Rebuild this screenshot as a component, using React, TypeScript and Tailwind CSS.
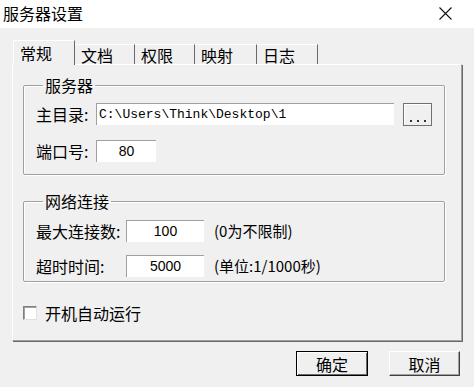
import React from 'react';

const cjk = "font-['Noto_Sans_CJK_SC','Liberation_Sans',sans-serif]";

function Tab({ label, active, w }: { label: string; active?: boolean; w: string }) {
  if (active) {
    return (
      <div className={`${w} h-[25px] -mb-px relative z-10 bg-[#f0f0f0] border-t border-l border-white border-r border-r-[#696969] pl-[6px] pt-[1px] text-[16px] leading-[22px]`}>
        {label}
      </div>
    );
  }
  return (
    <div className={`${w} h-[20px] border-t border-white border-r border-r-[#696969] pl-[6px] text-[16px] leading-[20px]`}>
      {label}
    </div>
  );
}

function Field({ value, w, mono }: { value: string; w: string; mono?: boolean }) {
  return (
    <div
      className={`${w} h-[22px] bg-white border-t border-l border-[#a0a0a0] flex items-center ${
        mono
          ? "pl-[2px] font-['Liberation_Mono',monospace] text-[13px]"
          : "justify-center font-['Liberation_Sans',sans-serif] text-[14px]"
      }`}
    >
      {value}
    </div>
  );
}

function Group({ title, children, className }: { title: string; children: React.ReactNode; className?: string }) {
  return (
    <fieldset className={`w-[422px] border border-[#a0a0a0] shadow-[inset_1px_1px_0_white,1px_1px_0_white] rounded-[2px] pl-[12px] ${className ?? ''}`}>
      <legend className="ml-[7px] px-[2px] text-[16px] leading-[20px]">{title}</legend>
      {children}
    </fieldset>
  );
}

export default function App() {
  return (
    <div className={`w-[474px] h-[387px] bg-[#f0f0f0] flex flex-col text-black ${cjk}`}>
      {/* title bar */}
      <div className="h-[28px] bg-white flex items-center justify-between pl-[3px] pr-[22px]">
        <span className="text-[16px] leading-[20px] -mt-[2px]">服务器设置</span>
        <svg width="13" height="13" viewBox="0 0 13 13" className="-mt-[2px]">
          <path d="M0.5 0.5 L12.5 12.5 M12.5 0.5 L0.5 12.5" stroke="#111" strokeWidth="1.1" />
        </svg>
      </div>

      <div className="pl-[12px] pt-[12px]">
        {/* tabs */}
        <div className="flex items-end h-[24px] pl-[1px]">
          <Tab label="常规" active w="w-[62px]" />
          <Tab label="文档" w="w-[60px]" />
          <Tab label="权限" w="w-[60px]" />
          <Tab label="映射" w="w-[62px]" />
          <Tab label="日志" w="w-[61px]" />
        </div>

        {/* panel */}
        <div className="w-[450px] h-[277px] bg-[#f0f0f0] border border-t-white border-l-white border-r-[#a0a0a0] border-b-[#a0a0a0] shadow-[1px_1px_0_#696969] pl-[10px] pt-[10px]">
          <Group title="服务器" className="pt-[8px] pb-[12px]">
            <div className="flex items-center h-[22px]">
              <span className="w-[60px] text-[16px] leading-[20px]">主目录:</span>
              <Field value="C:\Users\Think\Desktop\1" w="w-[298px]" mono />
              <div className="ml-[9px] w-[29px] h-[23px] border border-[#707070] shadow-[inset_1px_1px_0_white] flex items-end justify-center pb-[3px] gap-[5px]">
                <span className="w-[2px] h-[2px] bg-[#333]" />
                <span className="w-[2px] h-[2px] bg-[#333]" />
                <span className="w-[2px] h-[2px] bg-[#333]" />
              </div>
            </div>
            <div className="flex items-center h-[22px] mt-[15px]">
              <span className="w-[60px] text-[16px] leading-[20px]">端口号:</span>
              <Field value="80" w="w-[60px]" />
            </div>
          </Group>

          <Group title="网络连接" className="mt-[16px] pt-[9px] pb-[4px]">
            <div className="flex items-center h-[22px]">
              <span className="w-[90px] text-[16px] leading-[20px]">最大连接数:</span>
              <Field value="100" w="w-[78px]" />
              <span className="ml-[10px] text-[15px] leading-[20px]">(0为不限制)</span>
            </div>
            <div className="flex items-center h-[22px] mt-[13px]">
              <span className="w-[90px] text-[16px] leading-[20px]">超时时间:</span>
              <Field value="5000" w="w-[78px]" />
              <span className="ml-[10px] text-[15px] leading-[20px]">(单位:1/1000秒)</span>
            </div>
          </Group>

          <div className="flex items-center mt-[21px] gap-[8px]">
            <span className="w-[14px] h-[14px] bg-white border border-t-[#808080] border-l-[#808080] border-r-[#e0e0e0] border-b-[#e0e0e0] shadow-[inset_1px_1px_0_#a0a0a0]" />
            <span className="text-[16px] leading-[20px]">开机自动运行</span>
          </div>
        </div>
      </div>

      {/* buttons */}
      <div className="flex justify-end gap-[21px] pr-[14px] mt-[10px]">
        <button className="w-[72px] h-[25px] border border-black shadow-[inset_1px_1px_0_white,inset_-1px_-1px_0_#696969] bg-[#f0f0f0] text-[16px] leading-[20px]">
          确定
        </button>
        <button className="w-[71px] h-[25px] border border-t-white border-l-white border-r-[#404040] border-b-[#404040] shadow-[inset_-1px_-1px_0_#a0a0a0] bg-[#f0f0f0] text-[16px] leading-[20px]">
          取消
        </button>
      </div>
    </div>
  );
}
